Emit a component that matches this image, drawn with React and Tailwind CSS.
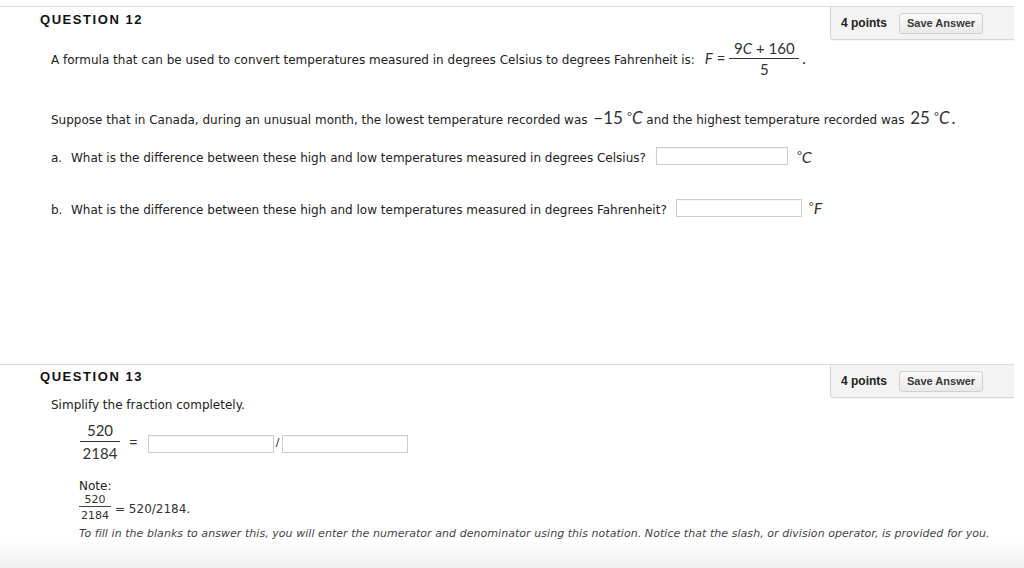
const body = { fontFamily: '"DejaVu Sans", Verdana, sans-serif' }
const head = { fontFamily: '"Liberation Sans", Arial, sans-serif' }
const math = { fontFamily: 'Lato, "Open Sans", sans-serif' }

function PointsBox() {
  return (
    <div className="w-[184px] h-[33px] bg-[#f3f3f3] border border-t-0 border-r-0 border-[#d6d6d6] rounded-bl-[4px] flex items-center pl-[10px] gap-[12px] shadow-[0_1px_1px_rgba(0,0,0,0.05)]" style={head}>
      <span className="text-[12px] font-bold text-[#222]">4 points</span>
      <button className="h-[21px] px-[7px] text-[11px] font-bold text-[#3a3a3a] border border-[#cfcfcf] rounded-[3px] bg-gradient-to-b from-[#fafafa] to-[#e9e9e9]">
        Save Answer
      </button>
    </div>
  )
}

function Header({ title, pad }) {
  return (
    <div className="flex justify-between items-start">
      <h2 className={`pl-[40px] text-[13px] leading-[16px] font-bold tracking-[0.12em] text-[#111] ${pad}`} style={head}>
        {title}
      </h2>
      <PointsBox />
    </div>
  )
}

function Input({ w }) {
  return <span className={`inline-block h-[18px] ${w} border border-[#cccccc] bg-white shadow-[inset_0_1px_1px_rgba(0,0,0,0.04)]`} />
}

function Deg({ unit }) {
  return (
    <span className="ml-[4px]">
      <span className="text-[12px] align-[3px]">°</span><i>{unit}</i>
    </span>
  )
}

export default function App() {
  return (
    <div className="w-[1024px] h-[568px] bg-white flex flex-col overflow-hidden text-[#222]" style={body}>
      <div className="w-[1014px] pt-[6px]">

        {/* Question 12 */}
        <section className="border-t border-[#dcdcdc] h-[358px]">
          <Header title="QUESTION 12" pad="pt-[5px]" />

          <div className="pl-[51px] text-[12px]">
            <div className="flex items-center -mt-[2px]">
              <span className="mt-[2px]">A formula that can be used to convert temperatures measured in degrees Celsius to degrees Fahrenheit is:</span>
              <span className="ml-[10px] text-[15px] text-[#333]" style={math}><i>F</i> =</span>
              <span className="ml-[4px] inline-flex flex-col items-center text-[15px] text-[#333]" style={math}>
                <span className="h-[20px] flex items-center px-[3px]">9<i>C</i>&nbsp;+&nbsp;160</span>
                <span className="w-[70px] h-px bg-[#333]" />
                <span className="h-[20px] flex items-center">5</span>
              </span>
              <span className="ml-[3px] text-[15px]" style={math}>.</span>
            </div>

            <p className="mt-[29px] leading-[18px]">
              Suppose that in Canada, during an unusual month, the lowest temperature recorded was{' '}
              <span className="ml-[2px] text-[17px] text-[#333]" style={math}>−15<Deg unit="C" /></span>{' '}
              and the highest temperature recorded was{' '}
              <span className="ml-[2px] text-[17px] text-[#333]" style={math}>25<Deg unit="C" /><span className="ml-[2px]">.</span></span>
            </p>

            <div className="mt-[20px] flex items-center h-[18px]">
              <span className="w-[20px]">a.</span>
              <span>What is the difference between these high and low temperatures measured in degrees Celsius?</span>
              <span className="ml-[10px]"><Input w="w-[132px]" /></span>
              <span className="ml-[9px] -mt-[2px] text-[16px] text-[#333]" style={math}><span className="text-[12px] align-[3px]">°</span><i>C</i></span>
            </div>

            <div className="mt-[34px] flex items-center h-[18px]">
              <span className="w-[20px]">b.</span>
              <span>What is the difference between these high and low temperatures measured in degrees Fahrenheit?</span>
              <span className="ml-[9px]"><Input w="w-[126px]" /></span>
              <span className="ml-[7px] -mt-[4px] text-[16px] text-[#333]" style={math}><span className="text-[12px] align-[3px]">°</span><i>F</i></span>
            </div>
          </div>
        </section>

        {/* Question 13 */}
        <section className="border-t border-[#dcdcdc]">
          <Header title="QUESTION 13" pad="pt-[4px]" />

          <div className="pl-[51px] text-[12px]">
            <p className="leading-[14px]">Simplify the fraction completely.</p>

            <div className="mt-[7px] ml-[29px] flex items-center">
              <span className="inline-flex flex-col items-center text-[15px] text-[#333]" style={math}>
                <span className="h-[22px] flex items-center">520</span>
                <span className="w-[40px] h-px bg-[#333]" />
                <span className="h-[22px] flex items-center">2184</span>
              </span>
              <span className="ml-[9px] text-[15px] text-[#333] mt-[2px]" style={math}>=</span>
              <span className="ml-[10px] mt-[4px] flex items-center">
                <Input w="w-[126px]" />
                <span className="w-[8px] text-center text-[11px]">/</span>
                <Input w="w-[126px]" />
              </span>
            </div>

            <div className="mt-[15px] ml-[28px] text-[#222]">
              <p className="leading-[14px]">Note:</p>
              <div className="flex items-center">
                <span className="inline-flex flex-col items-center text-[11px] text-[#333]">
                  <span className="leading-[13px]">520</span>
                  <span className="w-[32px] h-px bg-[#444]" />
                  <span className="leading-[18px]">2184</span>
                </span>
                <span className="ml-[4px] text-[#333]">= 520/2184.</span>
              </div>
              <p className="mt-[2px] leading-[14px] italic text-[11px] tracking-[0.05px] text-[#444]">
                To fill in the blanks to answer this, you will enter the numerator and denominator using this notation. Notice that the slash, or division operator, is provided for you.
              </p>
            </div>
          </div>
        </section>
      </div>

      <div className="flex-1 bg-gradient-to-b from-white to-[#efefef]" />
    </div>
  )
}
